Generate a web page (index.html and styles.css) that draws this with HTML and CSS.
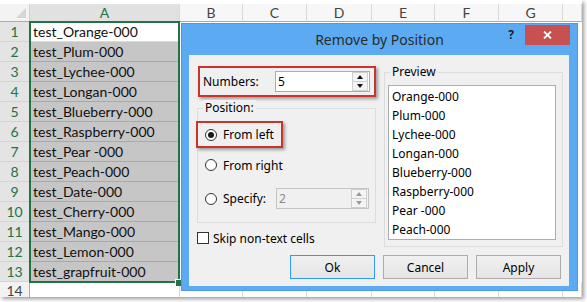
FILE: index.html
```html
<!DOCTYPE html>
<html>
<head>
<meta charset="utf-8">
<link rel="stylesheet" href="styles.css">
</head>
<body>
<div class="sheet">
  <div class="grid">
    <div class="corner"><span class="tri"></span></div>
    <div class="colhdr on">A</div>
    <div class="colhdr">B</div>
    <div class="colhdr">C</div>
    <div class="colhdr">D</div>
    <div class="colhdr">E</div>
    <div class="colhdr">F</div>
    <div class="colhdr">G</div>
    <div class="colhdr"></div>
    <div class="filler"></div>
    <div class="rowhdr on">1</div><div class="cell">test_Orange-000</div>
    <div class="rowhdr on">2</div><div class="cell hl">test_Plum-000</div>
    <div class="rowhdr on">3</div><div class="cell hl">test_Lychee-000</div>
    <div class="rowhdr on">4</div><div class="cell hl">test_Longan-000</div>
    <div class="rowhdr on">5</div><div class="cell hl">test_Blueberry-000</div>
    <div class="rowhdr on">6</div><div class="cell hl">test_Raspberry-000</div>
    <div class="rowhdr on">7</div><div class="cell hl">test_Pear -000</div>
    <div class="rowhdr on">8</div><div class="cell hl">test_Peach-000</div>
    <div class="rowhdr on">9</div><div class="cell hl">test_Date-000</div>
    <div class="rowhdr on">10</div><div class="cell hl">test_Cherry-000</div>
    <div class="rowhdr on">11</div><div class="cell hl">test_Mango-000</div>
    <div class="rowhdr on">12</div><div class="cell hl">test_Lemon-000</div>
    <div class="rowhdr on">13</div><div class="cell hl">test_grapfruit-000</div>
    <div class="rowhdr">14</div>
    <div class="cell"></div><div class="cell"></div><div class="cell"></div><div class="cell"></div>
    <div class="cell"></div><div class="cell"></div><div class="cell"></div><div class="cell"></div>
  </div>

  <div class="selection"><span class="handle"></span></div>

  <div class="dialog">
    <div class="titlebar">
      <div></div>
      <div class="title">Remove by Position</div>
      <div class="tbtns">
        <span class="help">?</span>
        <span class="close">
          <svg width="9" height="8" viewBox="0 0 9 8"><path d="M1 0.5 L8 7.5 M8 0.5 L1 7.5" stroke="#fff" stroke-width="1.8" fill="none"/></svg>
        </span>
      </div>
    </div>
    <div class="body">
      <div class="lcol">
        <div class="numbox mark">
          <span class="lbl">Numbers:</span>
          <div class="spin">
            <span class="val">5</span>
            <span class="arrows"><span class="up"></span><span class="down"></span></span>
          </div>
        </div>
        <div class="grp pos">
          <div class="legend">Position:</div>
          <div class="fromleft mark"><span class="radio on"></span>From left</div>
          <div class="optrow"><span class="radio"></span>From right</div>
          <div class="optrow specify"><span class="radio"></span><span class="slbl">Specify:</span>
            <div class="spin dis">
              <span class="val">2</span>
              <span class="arrows"><span class="up"></span><span class="down"></span></span>
            </div>
          </div>
        </div>
        <div class="chkrow"><span class="chk"></span>Skip non-text cells</div>
      </div>
      <div class="rcol">
        <div class="grp preview">
          <div class="legend">Preview</div>
          <div class="list">
            <div>Orange-000</div>
            <div>Plum-000</div>
            <div>Lychee-000</div>
            <div>Longan-000</div>
            <div>Blueberry-000</div>
            <div>Raspberry-000</div>
            <div>Pear -000</div>
            <div>Peach-000</div>
          </div>
        </div>
      </div>
      <div class="btnrow">
        <div class="btn default">Ok</div>
        <div class="btn">Cancel</div>
        <div class="btn">Apply</div>
      </div>
    </div>
  </div>
</div>
</body>
</html>
```
FILE: styles.css
```css
* { box-sizing: border-box; }
html, body { margin: 0; padding: 0; background: #fff; }
body { width: 587px; height: 302px; overflow: hidden; font-family: Lato, "Liberation Sans", sans-serif; }

.sheet {
  position: relative;
  width: 582px;
  height: 297px;
  background: #fff;
  padding-top: 4px;
  box-shadow: 2px 2px 4px rgba(0,0,0,0.4);
  overflow: hidden;
}
.grid {
  display: grid;
  grid-template-columns: 30px 150px 63px 64px 65px 63px 64px 64px 1fr;
  grid-template-rows: 18px repeat(13, 20px) 1fr;
  height: 100%;
}
.corner {
  background: #f3f3f3;
  border-right: 1px solid #d0d0d0;
  border-bottom: 1px solid #ababab;
  display: flex;
  justify-content: flex-end;
  align-items: flex-end;
  padding: 0 3px 3px 0;
}
.tri {
  width: 0; height: 0;
  border-left: 10px solid transparent;
  border-bottom: 10px solid #d6d6d6;
}
.colhdr {
  background: #f7f7f7;
  border-right: 1px solid #dadada;
  border-bottom: 1px solid #ababab;
  font-size: 14px;
  color: #444;
  display: flex;
  align-items: center;
  justify-content: center;
}
.colhdr.on { background: #e1e1e1; color: #217346; }
.filler { grid-column: 3 / -1; grid-row: 2 / 15; background: #fff; }
.rowhdr {
  background: #f3f3f3;
  border-right: 1px solid #ababab;
  border-bottom: 1px solid #d4d4d4;
  color: #444;
  font-size: 14px;
  display: flex;
  align-items: center;
  justify-content: center;
}
.rowhdr.on { background: #e4e4e4; color: #217346; }
.cell {
  border-right: 1px solid #dadada;
  border-bottom: 1px solid #dadada;
  font-size: 14px;
  color: #111;
  padding-left: 3px;
  line-height: 20px;
  white-space: nowrap;
}
.cell.hl { background: #c6c6c6; border-bottom-color: #a9a9a9; }

.selection {
  position: absolute;
  left: 29px; top: 21px;
  width: 151px; height: 262px;
  border: 2px solid #217346;
}
.handle {
  position: absolute;
  right: -4px; bottom: -5px;
  width: 7px; height: 7px;
  background: #217346;
  border-left: 1px solid #fff;
  border-top: 1px solid #fff;
}

/* dialog window */
.dialog {
  position: absolute;
  left: 181px; top: 23px;
  width: 397px; height: 268px;
  background: #5caaf2;
  border: 1px solid #4b9ae3;
  display: flex;
  flex-direction: column;
  font-family: "Noto Sans", "Open Sans", sans-serif;
  font-size: 12px;
  color: #000;
}
.titlebar {
  height: 31px;
  flex: none;
  display: grid;
  grid-template-columns: 1fr auto 1fr;
}
.title { font-size: 14px; line-height: 31px; color: #2a2a2a; }
.tbtns { display: flex; justify-content: flex-end; align-items: flex-start; }
.help {
  font-weight: bold;
  font-size: 12px;
  line-height: 20px;
  margin-top: 1px;
  margin-right: 11px;
  color: #1e1e1e;
}
.close {
  width: 45px; height: 20px;
  margin-top: 1px; margin-right: 7px;
  background: #c75050;
  display: flex; align-items: center; justify-content: center;
}
.body {
  margin: 0 8px 0 7px;
  height: 231px;
  flex: none;
  background: #f0f0f0;
  display: grid;
  grid-template-columns: 179px 179px;
  grid-template-rows: 181px auto;
  column-gap: 8px;
  padding: 11px 6px 0 8px;
}
.lcol, .rcol { display: flex; flex-direction: column; align-items: flex-start; }

.mark {
  border: 2px solid #c9352b;
  box-shadow: 2px 2px 3px rgba(0,0,0,0.35);
}
.numbox {
  margin-left: 1px;
  width: 178px; height: 31px;
  flex: none;
  display: flex; align-items: center;
  padding-left: 3px;
}
.numbox .lbl { width: 72px; }
.spin {
  width: 95px; height: 21px;
  border: 1px solid #abadb3;
  background: #fff;
  display: flex; align-items: center;
  padding-left: 2px;
}
.spin .val { flex: 1; }
.arrows {
  width: 16px; height: 19px;
  margin-right: 1px;
  border: 1px solid #cfcfcf;
  background: #f4f4f4;
  display: flex; flex-direction: column;
}
.arrows span { flex: 1; display: flex; align-items: center; justify-content: center; }
.arrows span + span { border-top: 1px solid #cfcfcf; }
.up::before {
  content: ""; width: 0; height: 0;
  border-left: 3.5px solid transparent; border-right: 3.5px solid transparent;
  border-bottom: 4px solid #111;
}
.down::before {
  content: ""; width: 0; height: 0;
  border-left: 3.5px solid transparent; border-right: 3.5px solid transparent;
  border-top: 4px solid #111;
}
.spin.dis { width: 93px; background: #f0f0f0; border-color: #c4c4c4; color: #8a8a8a; }
.spin.dis .up::before { border-bottom-color: #9a9a9a; }
.spin.dis .down::before { border-top-color: #9a9a9a; }

/* group boxes */
.grp {
  flex: none;
  width: 179px;
  border: 1px solid #dcdcdc;
  display: flex;
  flex-direction: column;
  align-items: flex-start;
}
.legend {
  margin: -9px 0 0 5px;
  padding: 0 2px;
  line-height: 16px;
  height: 16px;
  background: #f0f0f0;
}
.pos { margin-top: 11px; height: 115px; }
.fromleft {
  margin: 5px 0 0 -2px;
  width: 87px; height: 27px;
  display: flex; align-items: center;
  padding-left: 7px;
}
.radio {
  width: 12px; height: 12px;
  border-radius: 50%;
  border: 1px solid #333;
  background: #fff;
  margin-right: 6px;
  flex: none;
  display: flex; align-items: center; justify-content: center;
}
.radio.on::after {
  content: ""; width: 6px; height: 6px; border-radius: 50%; background: #1a1a1a;
}
.optrow { display: flex; align-items: center; height: 20px; padding-left: 7px; margin-top: 7px; }
.optrow.specify { margin-top: 13px; height: 21px; }
.slbl { width: 53px; }

.chkrow { display: flex; align-items: center; height: 12px; margin-top: 9px; flex: none; }
.chk {
  width: 12px; height: 12px;
  border: 1px solid #333;
  background: #fff;
  margin-right: 4px;
}

.preview { margin-top: 6px; height: 175px; }
.list {
  margin: 5px 0 0 3px;
  width: 168px; height: 155px;
  border: 1px solid #abadb3;
  background: #fff;
  padding: 1px 0 0 3px;
  line-height: 19px;
}

.btnrow {
  grid-column: 1 / -1;
  display: flex;
  justify-content: flex-end;
  gap: 8px;
  margin-top: 8px;
  padding-right: 2px;
}
.btn {
  width: 85px; height: 24px;
  border: 1px solid #acacac;
  background: linear-gradient(#f0f0f0, #e5e5e5);
  display: flex; align-items: center; justify-content: center;
}
.btn.default { border-color: #3399ff; }
```
